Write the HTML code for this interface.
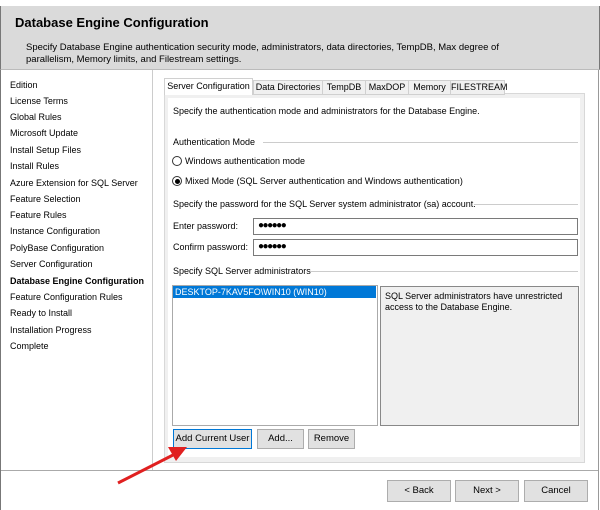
<!DOCTYPE html>
<html><head><style>
*{margin:0;padding:0;box-sizing:border-box}
body{width:600px;height:510px;position:relative;background:#fff;font-family:"Liberation Sans",sans-serif;font-size:9px;color:#000;overflow:hidden}
.a{position:absolute;white-space:nowrap}
.hdr{position:absolute;left:0;top:6px;width:600px;height:64px;background:#dadada;border-left:1px solid #777;border-right:1px solid #777;border-bottom:1px solid #bbb}
.nav div{position:absolute;left:10px;white-space:nowrap}
.tab{position:absolute;top:80px;height:15px;border:1px solid #d0d0d0;background:#f0f0f0;text-align:center;line-height:13px;font-size:9px;white-space:nowrap}
.line{position:absolute;height:1px;background:#ccc}
.in{position:absolute;background:#fff;border:1px solid #7a7a7a;padding-left:4px;font-size:10px;line-height:14px;letter-spacing:-1.5px}
.btn{position:absolute;background:#e1e1e1;border:1px solid #adadad;text-align:center;font-size:9.5px;white-space:nowrap}
.rad{position:absolute;width:10px;height:10px;border:1px solid #333;border-radius:50%;background:#fff}
</style></head><body>
<div class="hdr"></div>
<div class="a" style="left:15px;top:15px;font-size:13px;font-weight:bold">Database Engine Configuration</div>
<div class="a" style="left:26px;top:42px;font-size:9.5px;line-height:12px">Specify Database Engine authentication security mode, administrators, data directories, TempDB, Max degree of<br>parallelism, Memory limits, and Filestream settings.</div>
<div style="position:absolute;left:0;top:70px;width:1px;height:440px;background:#777"></div>
<div style="position:absolute;left:598px;top:70px;width:1px;height:440px;background:#999"></div>
<div style="position:absolute;left:152px;top:70px;width:1px;height:400px;background:#ccc"></div>
<div class="nav" style="font-size:9px">
<div style="top:80px">Edition</div><div style="top:96px">License Terms</div><div style="top:112px">Global Rules</div><div style="top:128px">Microsoft Update</div><div style="top:145px">Install Setup Files</div><div style="top:161px">Install Rules</div><div style="top:178px">Azure Extension for SQL Server</div><div style="top:194px">Feature Selection</div><div style="top:210px">Feature Rules</div><div style="top:226px">Instance Configuration</div><div style="top:243px">PolyBase Configuration</div><div style="top:259px">Server Configuration</div><div style="top:276px;font-weight:bold">Database Engine Configuration</div><div style="top:292px">Feature Configuration Rules</div><div style="top:308px">Ready to Install</div><div style="top:325px">Installation Progress</div><div style="top:341px">Complete</div>
</div>
<div style="position:absolute;left:164px;top:93px;width:421px;height:370px;background:#f0f0f0;border:1px solid #d8d8d8"></div>
<div style="position:absolute;left:168px;top:98px;width:412px;height:359px;background:#fff"></div>
<div class="tab" style="left:253px;width:70px">Data Directories</div>
<div class="tab" style="left:322px;width:44px">TempDB</div>
<div class="tab" style="left:365px;width:44px">MaxDOP</div>
<div class="tab" style="left:408px;width:43px">Memory</div>
<div class="tab" style="left:450px;width:55px">FILESTREAM</div>
<div class="tab" style="left:164px;top:78px;width:89px;height:17px;background:#fff;border-bottom:none;line-height:15px">Server Configuration</div>
<div class="a" style="left:173px;top:106px">Specify the authentication mode and administrators for the Database Engine.</div>
<div class="a" style="left:173px;top:137px">Authentication Mode</div><div class="line" style="left:263px;top:142px;width:315px"></div>
<div class="rad" style="left:172px;top:156px"></div><div class="a" style="left:185px;top:156px">Windows authentication mode</div>
<div class="rad" style="left:172px;top:176px"></div><div style="position:absolute;left:175px;top:179px;width:5px;height:5px;border-radius:50%;background:#000"></div><div class="a" style="left:185px;top:176px">Mixed Mode (SQL Server authentication and Windows authentication)</div>
<div class="a" style="left:173px;top:199px">Specify the password for the SQL Server system administrator (sa) account.</div><div class="line" style="left:474px;top:204px;width:104px"></div>
<div class="a" style="left:173px;top:221px">Enter password:</div>
<div class="in" style="left:253px;top:218px;width:325px;height:17px">●●●●●●</div>
<div class="a" style="left:173px;top:242px">Confirm password:</div>
<div class="in" style="left:253px;top:239px;width:325px;height:17px">●●●●●●</div>
<div class="a" style="left:173px;top:266px">Specify SQL Server administrators</div><div class="line" style="left:310px;top:271px;width:268px"></div>
<div style="position:absolute;left:172px;top:285px;width:206px;height:141px;border:1px solid #aaa;background:#fff"></div>
<div class="a" style="left:173px;top:286px;width:203px;height:12px;background:#0078d7;color:#fff;font-size:9px;line-height:12px;padding-left:2px">DESKTOP-7KAV5FO\WIN10 (WIN10)</div>
<div style="position:absolute;left:380px;top:286px;width:199px;height:140px;border:1px solid #888;background:#f0f0f0"></div>
<div class="a" style="left:385px;top:291px;font-size:9px;line-height:11px">SQL Server administrators have unrestricted<br>access to the Database Engine.</div>
<div class="btn" style="left:173px;top:429px;width:79px;height:20px;border:1px solid #0078d7;line-height:18px">Add Current User</div>
<div class="btn" style="left:257px;top:429px;width:47px;height:20px;line-height:18px">Add...</div>
<div class="btn" style="left:308px;top:429px;width:47px;height:20px;line-height:18px">Remove</div>
<div style="position:absolute;left:1px;top:470px;width:597px;height:1px;background:#aaa"></div>
<div class="btn" style="left:387px;top:480px;width:64px;height:22px;line-height:20px">&lt; Back</div>
<div class="btn" style="left:455px;top:480px;width:64px;height:22px;line-height:20px">Next &gt;</div>
<div class="btn" style="left:524px;top:480px;width:64px;height:22px;line-height:20px">Cancel</div>
<svg style="position:absolute;left:0;top:0" width="600" height="510"><line x1="118" y1="483" x2="175" y2="454" stroke="#e02020" stroke-width="3"/><polygon points="187,447 168,447 176,461" fill="#e02020"/></svg>
</body></html>
